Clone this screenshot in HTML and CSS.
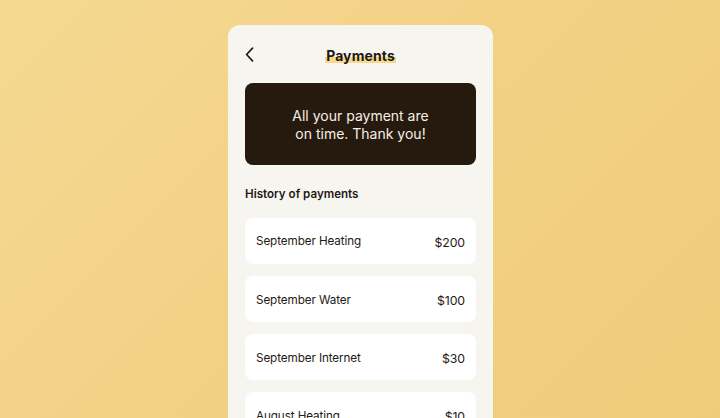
FILE: index.html
```html
<!DOCTYPE html>
<html lang="en">
<head>
    <meta charset="UTF-8">
    <meta name="viewport" content="width=device-width, initial-scale=1.0">
    <title>Payments</title>
    <link rel="stylesheet" href="styles.css">
</head>
<body>
    <div class="phone">
        <div class="header">
            <button class="back" aria-label="Back">
                <svg width="9" height="15" viewBox="0 0 9 15"><path d="M7.5 1.2 L1.6 7.5 L7.5 13.8" fill="none" stroke="#1f1a14" stroke-width="1.7" stroke-linecap="round" stroke-linejoin="round"/></svg>
            </button>
            <h1><span class="mark">Payments</span></h1>
        </div>

        <div class="banner">
            <p>All your payment are<br>on time. Thank you!</p>
        </div>

        <h2>History of payments</h2>
        <ul class="payments">
            <li><span>September Heating</span><span class="amount">$200</span></li>
            <li><span>September Water</span><span class="amount">$100</span></li>
            <li><span>September Internet</span><span class="amount">$30</span></li>
            <li><span>August Heating</span><span class="amount">$10</span></li>
        </ul>
    </div>
</body>
</html>
```

FILE: styles.css
```css
body {
    margin: 0;
    height: 418px;
    overflow: hidden;
    font-family: "Inter", "Open Sans", sans-serif;
    background: linear-gradient(135deg, #f5d992 0%, #f2d083 55%, #f0cc7a 100%);
    display: flex;
    justify-content: center;
    color: #1f1a14;
}
.phone {
    width: 265px;
    margin-top: 25px;
    margin-left: 1px;
    background: #f7f5f0;
    border-radius: 12px 12px 0 0;
    padding: 0 17px;
    box-sizing: border-box;
    height: 393px;
    overflow: hidden;
}
.header {
    position: relative;
    display: flex;
    align-items: center;
    justify-content: center;
    height: 30px;
    margin-top: 15px;
}
.back {
    position: absolute;
    left: -2px;
    top: 7px;
    background: none;
    border: none;
    padding: 0 2px;
    cursor: pointer;
    display: flex;
}
h1 {
    margin: 0;
    font-size: 14px;
    font-weight: 700;
    letter-spacing: 0.1px;
}
.mark {
    background: linear-gradient(to bottom, transparent 60%, #f6d98c 60%, #f6d98c 94%, transparent 94%);
    padding: 0 1px;
}
.banner {
    margin-top: 13px;
    height: 82px;
    background: #261a0e;
    border-radius: 8px;
    display: flex;
    align-items: center;
    justify-content: center;
}
.banner p {
    margin: 0;
    color: #f4efe6;
    font-size: 14px;
    line-height: 18px;
    text-align: center;
    padding-top: 1px;
}
h2 {
    margin: 22px 0 17px;
    font-size: 11.6px;
    font-weight: 600;
}
.payments {
    list-style: none;
    margin: 0;
    padding: 0;
    display: flex;
    flex-direction: column;
    gap: 12px;
}
.payments li {
    height: 46px;
    background: #fff;
    border-radius: 8px;
    display: flex;
    align-items: center;
    justify-content: space-between;
    padding: 2px 11px 0;
    box-sizing: border-box;
    font-size: 11.7px;
    letter-spacing: -0.1px;
}
.payments li:first-child {
    padding-top: 0;
}
.amount {
    font-size: 12.3px;
    padding-top: 2px;
}
.payments li + li .amount {
    padding-top: 0;
}
```
